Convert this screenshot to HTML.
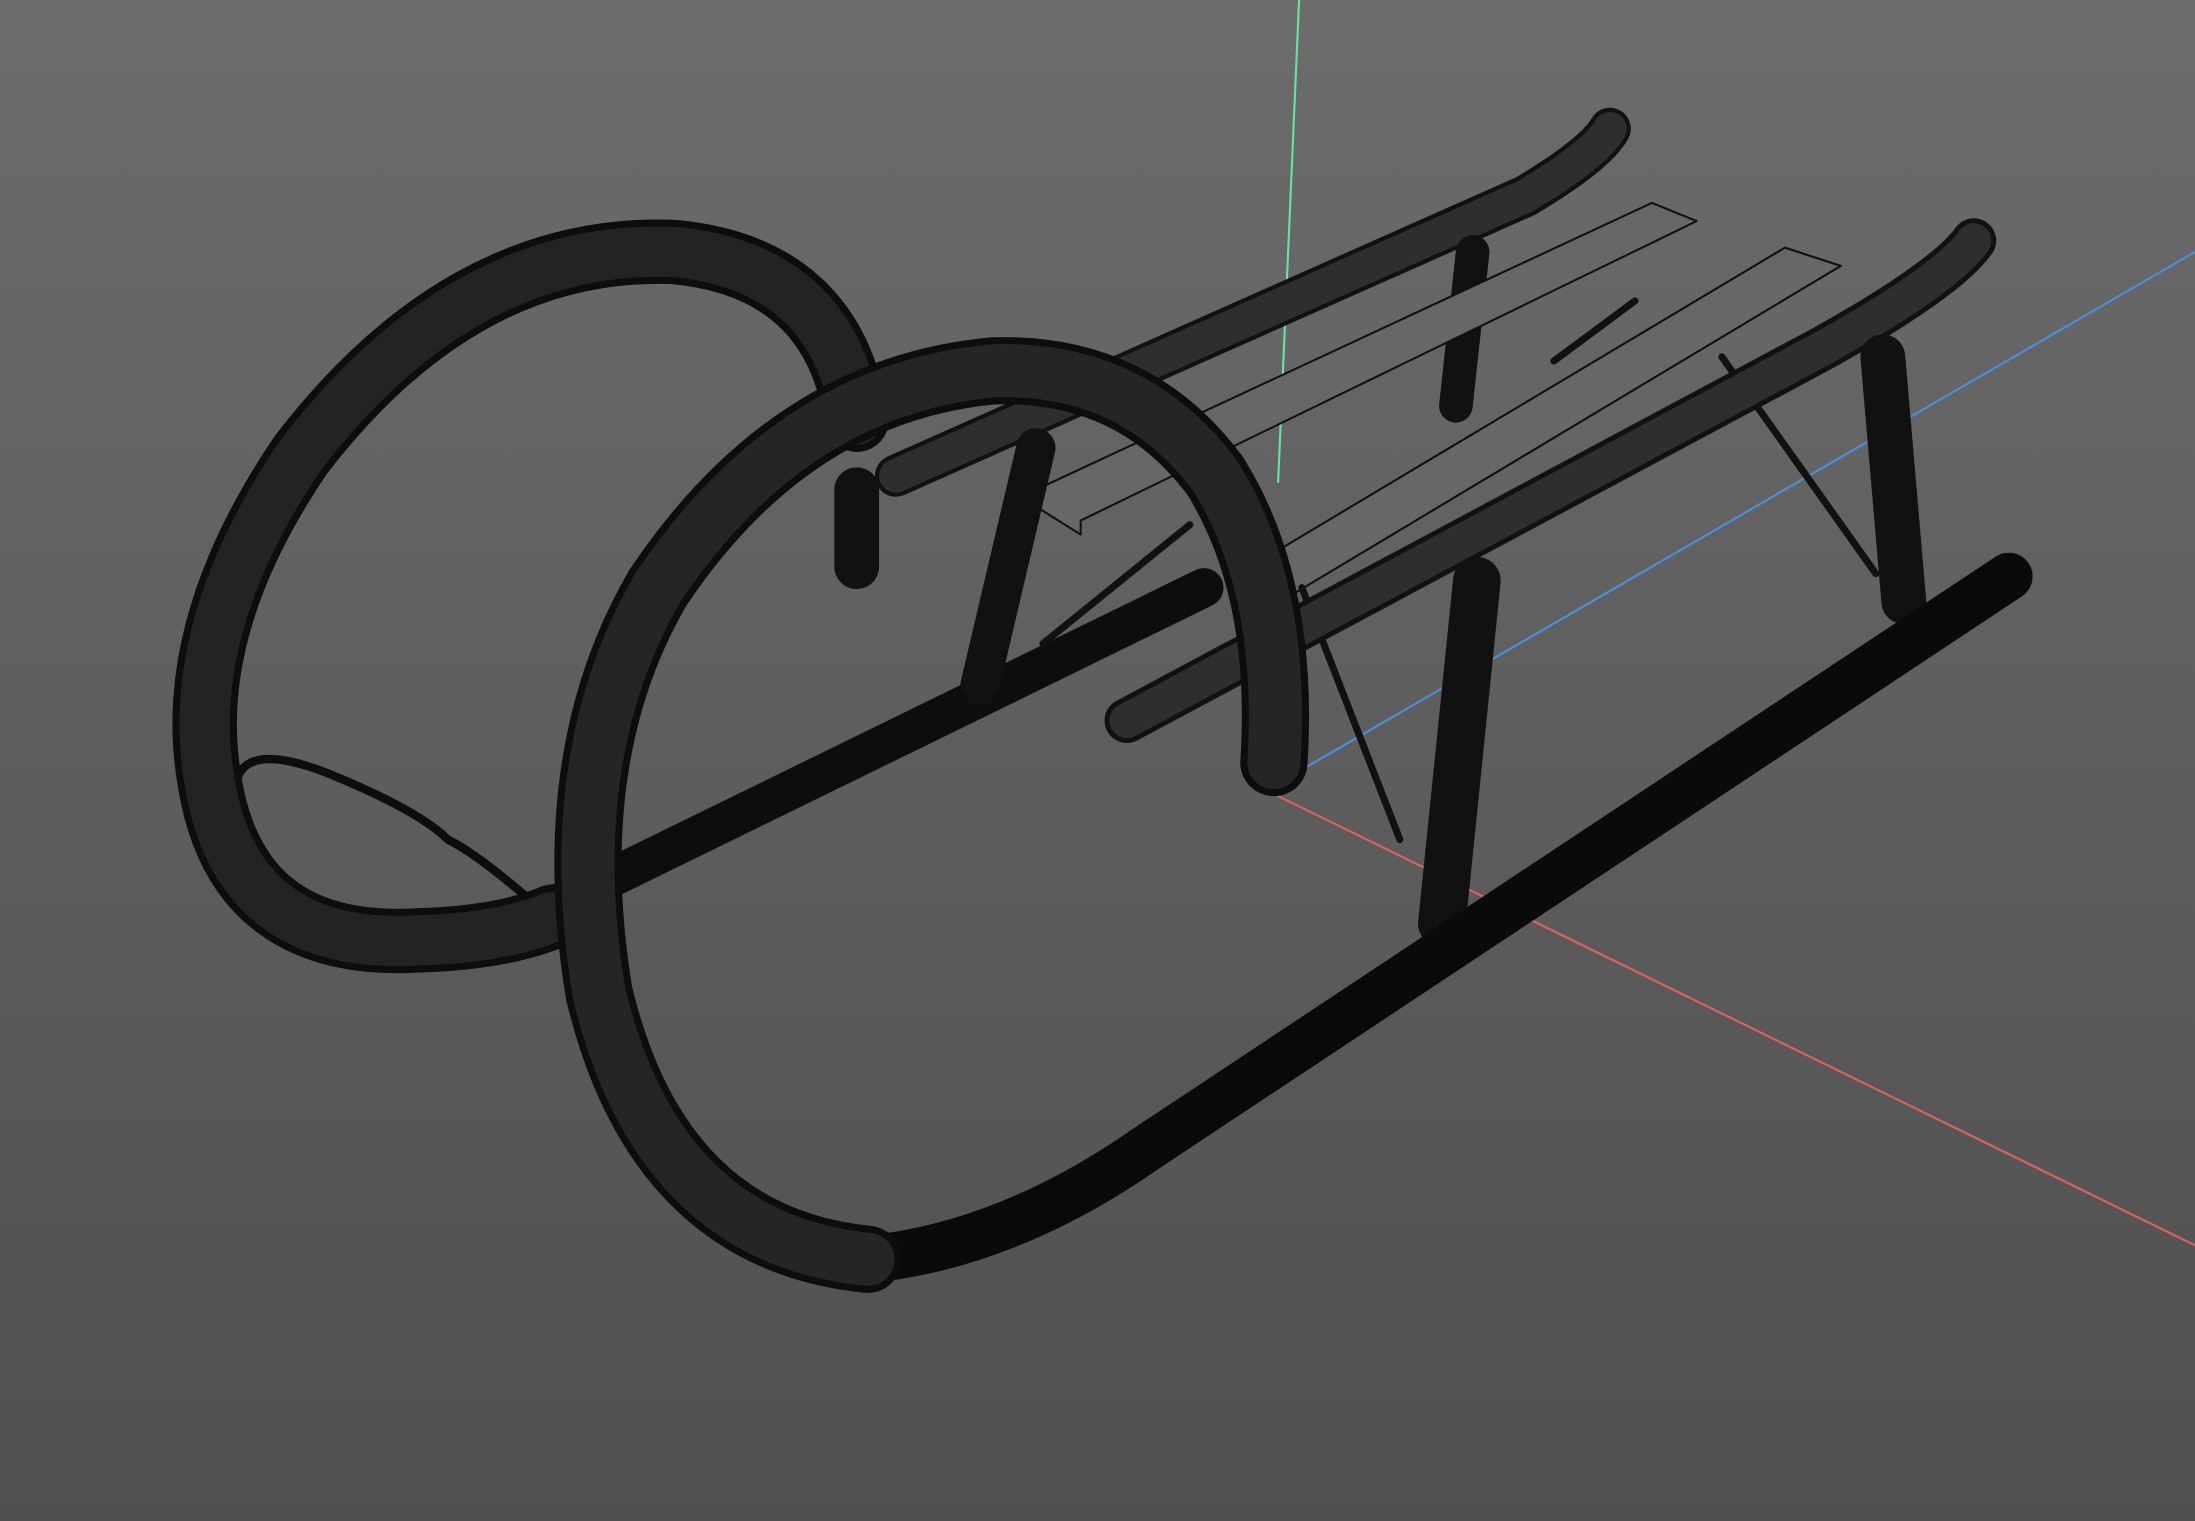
<!DOCTYPE html>
<html><head><meta charset="utf-8"><style>
html,body{margin:0;padding:0;width:2195px;height:1521px;overflow:hidden;background:#5e5e5e}
svg{display:block}
</style></head><body>
<svg width="2195" height="1521" viewBox="0 0 1568 1087" preserveAspectRatio="none" xmlns="http://www.w3.org/2000/svg">
<defs>
<linearGradient id="bg" x1="0" y1="0" x2="0" y2="1">
<stop offset="0" stop-color="#6c6c6c"/><stop offset="1" stop-color="#4f4f4f"/>
</linearGradient>
</defs>
<rect width="1568" height="1087" fill="url(#bg)"/>
<line x1="928" y1="0" x2="913" y2="345" stroke="#5fe8a0" stroke-width="1.5"/>
<line x1="1568" y1="180" x2="930" y2="550" stroke="#4a8fe0" stroke-width="1.5"/>
<line x1="905" y1="565" x2="1568" y2="890" stroke="#e06060" stroke-width="1.5"/>

<g fill="none" stroke-linecap="round" stroke-linejoin="round">
<!-- back rail -->
<path d="M640 340 L1090 140 Q1140 110 1150 92" stroke="#111" stroke-width="30"/>
<path d="M640 340 L1090 140 Q1140 110 1150 92" stroke="#2e2e2e" stroke-width="24" stroke-dasharray="2 2"/>
<!-- back legs -->
<path d="M1052 180 L1040 290" stroke="#111" stroke-width="24"/>
<path d="M612 350 L612 405" stroke="#111" stroke-width="32"/>
<!-- back runner -->
<path d="M380 655 L860 420" stroke="#0d0d0d" stroke-width="28"/>
<!-- left loop -->
<path d="M612 300 Q595 190 480 180 Q330 175 215 325 Q130 450 150 560 Q170 680 300 672 Q360 670 395 655" stroke="#0d0d0d" stroke-width="46"/>
<path d="M612 300 Q595 190 480 180 Q330 175 215 325 Q130 450 150 560 Q170 680 300 672 Q360 670 395 655" stroke="#232323" stroke-width="36" stroke-dasharray="1.5 2"/>
<path d="M170 555 Q180 530 240 555 Q300 580 320 600 Q340 610 375 640" stroke="#0d0d0d" stroke-width="6"/>
<!-- slats -->
<g stroke="#111" stroke-width="1.5" fill="#676767">
<polygon points="740,350 1180,145 1212,158 772,372 772,382 740,362"/>
<polygon points="885,410 1275,177 1315,190 918,428 918,438 885,420"/>
</g>
<path d="M745 460 L850 375 M1168 215 L1110 258 M1230 255 L1340 410 M930 420 L1000 600" stroke="#111" stroke-width="5"/>
<path d="M740 320 L700 490" stroke="#111" stroke-width="28"/>
<!-- front rail -->
<path d="M805 515 L1300 250 Q1390 200 1410 172" stroke="#111" stroke-width="32"/>
<path d="M805 515 L1300 250 Q1390 200 1410 172" stroke="#2e2e2e" stroke-width="25" stroke-dasharray="2 2"/>
<path d="M1055 415 L1030 660" stroke="#111" stroke-width="34"/>
<path d="M1345 255 L1360 430" stroke="#111" stroke-width="32"/>
<!-- front runner -->
<path d="M620 900 Q720 890 820 820 L1435 412" stroke="#0a0a0a" stroke-width="34"/>
<!-- front loop -->
<path d="M910 545 Q918 420 868 340 Q810 262 710 265 Q565 278 470 420 Q400 540 428 710 Q470 885 620 900" stroke="#0d0d0d" stroke-width="48"/>
<path d="M910 545 Q918 420 868 340 Q810 262 710 265 Q565 278 470 420 Q400 540 428 710 Q470 885 620 900" stroke="#252525" stroke-width="38" stroke-dasharray="1.5 2"/>
</g>
</svg>
</body></html>
